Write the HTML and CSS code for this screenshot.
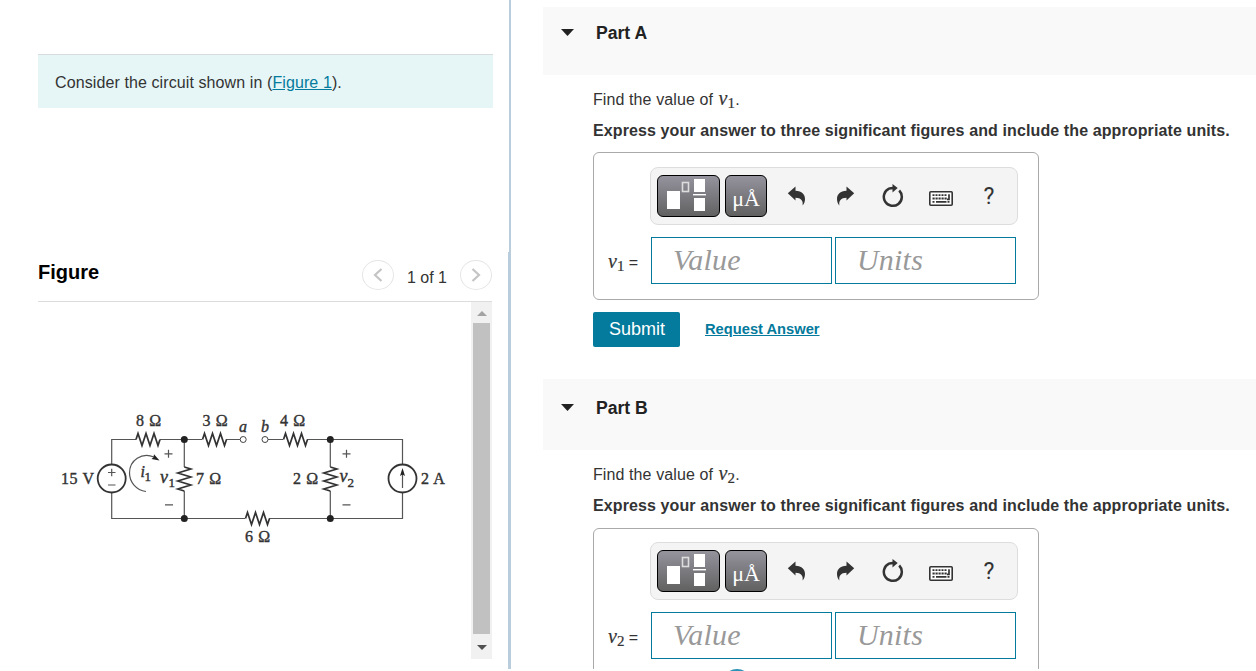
FILE: index.html
```
<!DOCTYPE html>
<html lang="en">
<head>
  <meta charset="UTF-8">
  <meta name="viewport" content="width=device-width, initial-scale=1.0">
  <title>Circuit problem</title>
  <link rel="stylesheet" href="styles.css">
</head>
<body>

  <!-- shared toolbar icons -->
  <svg class="sprite" aria-hidden="true">
    <symbol id="icon-template" viewBox="0 0 61 40">
      <rect x="9" y="15" width="13" height="18" fill="#fff"/>
      <rect x="24.500" y="6.500" width="6" height="9" fill="none" stroke="#ddd" stroke-width="1.600"/>
      <rect x="36" y="3" width="11" height="13" fill="#fff"/>
      <rect x="35" y="18" width="13" height="1.400" fill="#fff"/>
      <rect x="36" y="22" width="11" height="13" fill="#fff"/>
    </symbol>
    <symbol id="icon-undo" viewBox="0 0 20 20">
      <path d="M.8 7.200 8.500.500v4.200c6.500.2 9.500 3.600 9.500 8.200 0 2.700-1 5-2.400 6.600.8-4.800-1.500-7.700-7.100-7.800v2.800z" fill="#333"/>
    </symbol>
    <symbol id="icon-reset" viewBox="0 0 22 24">
      <path d="M17.200 6.500A9 9 0 1 1 7 4.700Q8.800 4 11.500 4" fill="none" stroke="#333" stroke-width="2.500"/>
      <path d="M10.500 0v8.500L15.700 4z" fill="#333"/>
    </symbol>
    <symbol id="icon-keyboard" viewBox="0 0 24 15">
      <rect x=".8" y=".8" width="22.400" height="13.400" rx="1" fill="#fff" stroke="#333" stroke-width="1.600"/>
      <path d="M3.500 4.200h15M3.500 10.800h2M18.500 10.800h2" stroke="#333" stroke-width="1.800" stroke-dasharray="2 1"/>
      <path d="M3.500 7.500h15" stroke="#333" stroke-width="1.800" stroke-dasharray="2.200 .8"/>
      <path d="M7 10.800h10.500M20 3.200v5.100h-2" stroke="#333" stroke-width="1.700" fill="none"/>
    </symbol>
  </svg>

  <div class="page">
    <aside class="left-pane">
      <div class="intro">Consider the circuit shown in (<a href="#figure">Figure 1</a>).</div>

      <div class="figure-header">
        <h2>Figure</h2>
        <div class="pager">
          <button class="pager-btn" aria-label="Previous"><svg width="10" height="14" viewBox="0 0 10 14"><path d="M8.500 1 2 7l6.500 6"/></svg></button>
          <span class="pager-text">1 of 1</span>
          <button class="pager-btn" aria-label="Next"><svg width="10" height="14" viewBox="0 0 10 14"><path d="M1.500 1 8 7l-6.500 6"/></svg></button>
        </div>
      </div>

      <div class="figure-view" id="figure">
        <svg class="circuit" width="433" height="357" viewBox="38 302 433 357">
          <!-- wires -->
          <g class="wire">
            <path d="M111.700 464V439.500H136M160 439.500H202M226 439.500H240M268 439.500H283M307 439.500H402.500V464"/>
            <path d="M111.700 493V518.500H245M269 518.500H402.500V493"/>
            <path d="M184.300 439.500V467M184.300 491V518.500M330.300 439.500V467M330.300 491V518.500"/>
          </g>
          <!-- resistors -->
          <g class="resistor">
            <path id="res-h" d="M136 439.500l2-6 4 12 4-12 4 12 4-12 4 12 2-6"/>
            <use href="#res-h" x="66.500"/>
            <use href="#res-h" x="147.500"/>
            <use href="#res-h" x="109.500" y="79"/>
            <path id="res-v" d="M184.300 467l6.500 2-13 4 13 4-13 4 13 4-13 4 6.500 2"/>
            <use href="#res-v" x="146"/>
          </g>
          <!-- sources -->
          <g class="source">
            <circle cx="111.700" cy="478.500" r="14"/>
            <circle cx="402.500" cy="478.500" r="14"/>
          </g>
          <path class="wire" d="M108 472.500h7.500M111.700 468.800v7.500M108 485h7.500"/>
          <path class="wire" d="M402.500 488V471"/>
          <path class="fill" d="M402.500 468l2.500 8-2.500-1.500L400 476z"/>
          <!-- nodes and terminals -->
          <g class="fill">
            <circle cx="184.300" cy="439.500" r="3.500"/>
            <circle cx="184.300" cy="518.500" r="3.500"/>
            <circle cx="330.300" cy="439.500" r="3.500"/>
            <circle cx="330.300" cy="518.500" r="3.500"/>
          </g>
          <circle class="terminal" cx="243.200" cy="439.500" r="3"/>
          <circle class="terminal" cx="265" cy="439.500" r="3"/>
          <!-- mesh current -->
          <path class="wire" d="M146 491.500C136 490 129.500 482 129.500 473C129.500 460 142 452 154 457"/>
          <path class="fill" d="M159.500 460.500l-8-1.500 2-1.800.5-3z"/>
          <!-- polarity marks -->
          <path class="wire" d="M164.500 453.800h8M168.500 449.800v8M165 504.800h8M342.500 453.800h8M346.500 449.800v8M342.500 504.800h8"/>
          <!-- labels -->
          <g class="label">
            <text x="136" y="426">8 Ω</text>
            <text x="202.500" y="426">3 Ω</text>
            <text x="280" y="426">4 Ω</text>
            <text x="196" y="484">7 Ω</text>
            <text x="293" y="484">2 Ω</text>
            <text x="245" y="542">6 Ω</text>
            <text x="61" y="484">15 V</text>
            <text x="421" y="484">2 A</text>
            <text class="it" x="239" y="432">a</text>
            <text class="it" x="261" y="432">b</text>
            <text class="it" x="140.500" y="477">i</text>
            <text class="sub" x="144.500" y="481">1</text>
            <text class="it wide-v" x="160" y="483">v</text>
            <text class="sub" x="168.500" y="487">1</text>
            <text class="it wide-v" x="339.500" y="482">v</text>
            <text class="sub" x="347.500" y="487">2</text>
          </g>
        </svg>
        <div class="scrollbar">
          <span class="arrow-up"></span>
          <div class="thumb"></div>
          <span class="arrow-down"></span>
        </div>
      </div>
    </aside>

    <div class="divider"><div class="divider-top"></div><div class="divider-bottom"></div></div>

    <main class="right-pane">
      <section class="part">
        <header class="part-header"><span class="caret"></span><h2>Part A</h2></header>
        <div class="part-body">
          <p class="question">Find the value of <span class="math"><i>v</i><sub>1</sub></span>.</p>
          <p class="instruction">Express your answer to three significant figures and include the appropriate units.</p>
          <div class="answer-box">
            <div class="toolbar">
              <button class="tool-dark wide" aria-label="Templates"><svg width="61" height="40"><use href="#icon-template"/></svg></button>
              <button class="tool-dark">μÅ</button>
              <button class="tool"><svg width="20" height="20"><use href="#icon-undo"/></svg></button>
              <button class="tool flip"><svg width="20" height="20"><use href="#icon-undo"/></svg></button>
              <button class="tool"><svg width="22" height="24"><use href="#icon-reset"/></svg></button>
              <button class="tool keyboard"><svg width="24" height="15"><use href="#icon-keyboard"/></svg></button>
              <button class="tool help">?</button>
            </div>
            <div class="answer-row">
              <span class="answer-label"><span class="math"><i>v</i><sub>1</sub></span> =</span>
              <div class="field">Value</div>
              <div class="field">Units</div>
            </div>
          </div>
          <div class="actions">
            <button class="submit">Submit</button>
            <a class="request" href="#">Request Answer</a>
          </div>
        </div>
      </section>

      <section class="part part-b">
        <header class="part-header"><span class="caret"></span><h2>Part B</h2></header>
        <div class="part-body">
          <p class="question">Find the value of <span class="math"><i>v</i><sub>2</sub></span>.</p>
          <p class="instruction">Express your answer to three significant figures and include the appropriate units.</p>
          <div class="answer-box">
            <div class="toolbar">
              <button class="tool-dark wide" aria-label="Templates"><svg width="61" height="40"><use href="#icon-template"/></svg></button>
              <button class="tool-dark">μÅ</button>
              <button class="tool"><svg width="20" height="20"><use href="#icon-undo"/></svg></button>
              <button class="tool flip"><svg width="20" height="20"><use href="#icon-undo"/></svg></button>
              <button class="tool"><svg width="22" height="24"><use href="#icon-reset"/></svg></button>
              <button class="tool keyboard"><svg width="24" height="15"><use href="#icon-keyboard"/></svg></button>
              <button class="tool help">?</button>
            </div>
            <div class="answer-row">
              <span class="answer-label"><span class="math"><i>v</i><sub>2</sub></span> =</span>
              <div class="field">Value</div>
              <div class="field">Units</div>
            </div>
          </div>
        </div>
      </section>
    </main>
    <span class="badge"></span>
  </div>

</body>
</html>
```
FILE: styles.css
```
* {
  box-sizing: border-box;
}

body {
  margin: 0;
  overflow: hidden;
  background: #fff;
  color: #333;
  font-family: "Liberation Sans", Arial, sans-serif;
  font-size: 16px;
}

h2, p {
  margin: 0;
}

button {
  padding: 0;
  border: 0;
  background: none;
  font-family: inherit;
}

svg {
  display: block;
}

a {
  color: #047a9c;
}

.sprite {
  display: none;
}

.page {
  position: relative;
  display: flex;
  width: 1256px;
  height: 671px;
  overflow: hidden;
}

/* left side */
.left-pane {
  width: 508px;
  padding: 54px 0 0 38px;
  flex-shrink: 0;
}

.intro {
  width: 455px;
  height: 54px;
  padding: 18px 17px;
  border-top: 1px solid #d9dcdc;
  background: #e6f6f7;
  letter-spacing: 0.1px;
  line-height: 20px;
}

.figure-header {
  display: flex;
  justify-content: space-between;
  width: 454px;
  height: 60px;
  margin-top: 134px;
  border-bottom: 1px solid #dcdcdc;
}

.figure-header h2 {
  padding-top: 18px;
  color: #000;
  font-size: 20px;
  line-height: 24px;
}

.pager {
  display: flex;
  gap: 13px;
  padding-top: 18px;
}

.pager-btn {
  display: flex;
  align-items: center;
  justify-content: center;
  width: 32px;
  height: 30px;
  border: 1px solid #e6e6e6;
  border-radius: 50%;
}

.pager-btn path {
  fill: none;
  stroke: #c4c4c4;
  stroke-width: 2.2;
}

.pager-text {
  padding-top: 8px;
  line-height: 20px;
}

.figure-view {
  display: flex;
  width: 454px;
  height: 357px;
}

.scrollbar {
  display: flex;
  flex-direction: column;
  align-items: center;
  width: 21px;
  background: #f1f1f1;
}

.thumb {
  width: 17px;
  height: 311px;
  margin: 7px 0 11px;
  background: #c1c1c1;
}

.arrow-up,
.arrow-down {
  border: 5px solid transparent;
}

.arrow-up {
  margin-top: 9px;
  border-top: 0;
  border-bottom-color: #a3a3a3;
}

.arrow-down {
  border-bottom: 0;
  border-top-color: #505050;
}

/* circuit drawing */
.wire {
  fill: none;
  stroke: #555;
  stroke-width: 1.2;
}

.resistor {
  fill: none;
  stroke: #333;
  stroke-width: 1.7;
}

.source {
  fill: none;
  stroke: #333;
  stroke-width: 1.8;
}

.fill {
  fill: #222;
}

.terminal {
  fill: #fff;
  stroke: #444;
}

.label {
  fill: #333;
  stroke: #333;
  stroke-width: 0.4;
  font-family: "Liberation Serif", "Times New Roman", serif;
  font-size: 16px;
  letter-spacing: 0.6px;
}

.it {
  font-style: italic;
}

.wide-v {
  font-size: 18px;
}

.sub {
  font-size: 13px;
}

/* pane divider */
.divider {
  display: flex;
  flex-direction: column;
  align-items: flex-end;
  width: 3px;
  height: 669px;
  flex-shrink: 0;
}

.divider-top {
  width: 2px;
  height: 252px;
  background: #b9cddd;
}

.divider-bottom {
  width: 3px;
  flex: 1;
  background: #b9cddd;
}

/* right side */
.right-pane {
  flex: 1;
  height: 669px;
  padding: 7px 0 0 32px;
  overflow: hidden;
}

.part {
  height: 372px;
}

.part-header {
  display: flex;
  height: 68px;
  padding: 16px 0 0 18px;
  background: #f9f9f9;
}

.part-header h2 {
  margin-left: 22px;
  color: #222;
  font-size: 17.6px;
  line-height: 20px;
}

.caret {
  width: 13px;
  height: 7px;
  margin-top: 6px;
  background: #222;
  clip-path: polygon(0 0, 100% 0, 50% 100%);
}

.part-body {
  padding: 13px 0 0 50px;
}

.question {
  height: 33px;
  letter-spacing: 0.1px;
  line-height: 20px;
}

.instruction {
  height: 31px;
  font-weight: bold;
  letter-spacing: 0.11px;
  line-height: 20px;
  white-space: nowrap;
}

.math {
  padding-left: 1px;
  font-family: "Liberation Serif", "Times New Roman", serif;
  font-size: 20px;
  line-height: 1;
  -webkit-text-stroke: 0.2px #333;
}

.math sub {
  font-size: 15px;
  line-height: 0;
  vertical-align: -3px;
}

.answer-box {
  width: 446px;
  height: 148px;
  padding: 14px 0 0 14px;
  border: 1px solid #aaa;
  border-radius: 6px;
}

.toolbar {
  display: flex;
  align-items: center;
  width: 368px;
  height: 58px;
  margin-left: 42px;
  padding-left: 6px;
  border: 1px solid #ddd;
  border-radius: 8px;
  background: #f4f4f4;
}

.tool-dark {
  width: 42px;
  height: 42px;
  margin-right: 6px;
  padding-top: 5px;
  border: 1px solid #000;
  border-radius: 6px;
  background: linear-gradient(#95939d, #616161);
  color: #fff;
  font-family: "Liberation Serif", "Times New Roman", serif;
  font-size: 22px;
}

.tool-dark.wide {
  width: 63px;
  margin-right: 5px;
  padding-top: 0;
}

.tool {
  display: flex;
  align-items: center;
  justify-content: center;
  width: 48px;
  height: 42px;
}

.flip svg {
  transform: scaleX(-1);
}

.keyboard {
  padding-top: 5px;
}

.help {
  color: #333;
  font-family: Roboto, sans-serif;
  font-size: 23px;
}

.answer-row {
  display: flex;
  margin-top: 12px;
}

.answer-label {
  width: 43px;
  padding-top: 14px;
  line-height: 20px;
  white-space: nowrap;
}

.answer-label .math {
  padding-left: 0;
}

.field {
  width: 181px;
  height: 47px;
  margin-right: 3px;
  padding-left: 21px;
  border: 1px solid #047a9c;
  color: #999;
  font-family: "Liberation Serif", "Times New Roman", serif;
  font-size: 30px;
  font-style: italic;
  letter-spacing: 0.2px;
  line-height: 44px;
}

.actions {
  display: flex;
  margin-top: 12px;
}

.submit {
  width: 87px;
  height: 35px;
  padding-left: 1px;
  border-radius: 2px;
  background: #047a9c;
  color: #fff;
  font-size: 18px;
}

.request {
  margin-left: 25px;
  font-size: 14.7px;
  font-weight: bold;
  line-height: 34px;
}

.part-b .part-header {
  height: 71px;
  padding-top: 19px;
}

.part-b .instruction {
  height: 32px;
}

.part-b .answer-box {
  height: 160px;
  padding-top: 13px;
}

/* top edge of the round button below the fold */
.badge {
  position: absolute;
  top: 669px;
  left: 722px;
  width: 30px;
  height: 30px;
  border-radius: 50%;
  background: #2a93b5;
}
```
